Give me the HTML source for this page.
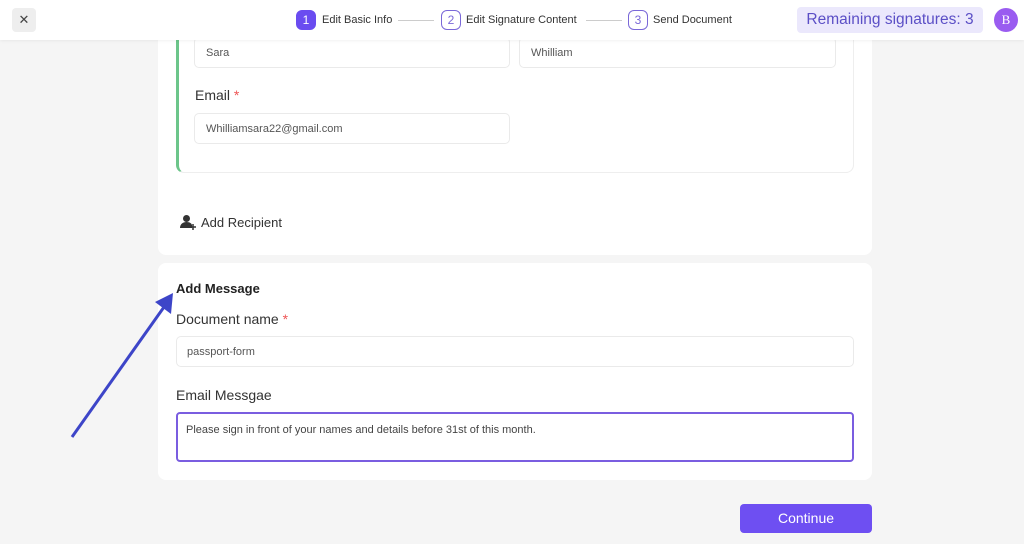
<!DOCTYPE html><html><head><style>
*{box-sizing:border-box;margin:0;padding:0}
body{width:1024px;height:544px;overflow:hidden;background:#f5f5f5;font-family:"Liberation Sans",sans-serif;position:relative;color:#333}
.abs{position:absolute}
.hdr{left:0;top:0;width:1024px;height:40px;background:#fff;box-shadow:0 1px 3px rgba(0,0,0,.06);z-index:2}
.circ{width:20px;height:20px;border-radius:6px;border:1px solid #7a68d8;font-size:12px;text-align:center;line-height:18px;color:#7a68d8}
.st{font-size:11px;color:#333;top:14px}
.ln{height:1px;background:#ccc;top:20px}
.card{background:#fff;border-radius:8px;left:158px;width:714px}
.inp{background:#fff;border:1px solid #eaeaea;border-radius:5px;font-size:11px;color:#555;padding-left:11px;line-height:30px}
.lbl{font-size:14px;color:#333}
.lbl b{color:#e55;font-weight:normal}
</style></head><body>
<div class="abs hdr">
 <div class="abs" style="left:12px;top:8px;width:24px;height:24px;background:#eee;border-radius:4px;text-align:center;line-height:24px;font-size:13px;color:#444">✕</div>
 <div class="abs circ" style="left:296px;top:10px;background:#6a4cf0;border-color:#6a4cf0;color:#fff">1</div>
 <div class="abs st" style="left:322px">Edit Basic Info</div>
 <div class="abs ln" style="left:398px;width:36px"></div>
 <div class="abs circ" style="left:441px;top:10px">2</div>
 <div class="abs st" style="left:466px">Edit Signature Content</div>
 <div class="abs ln" style="left:586px;width:36px"></div>
 <div class="abs circ" style="left:628px;top:10px">3</div>
 <div class="abs st" style="left:653px">Send Document</div>
 <div class="abs" style="left:797px;top:7px;width:186px;height:26px;background:#ebe8fc;border-radius:4px;color:#5b4fc6;font-size:15.5px;line-height:26px;text-align:center">Remaining signatures: 3</div>
 <div class="abs" style="left:994px;top:8px;width:24px;height:24px;border-radius:50%;background:#9a5cf0;color:#fff;font-family:'Liberation Serif',serif;font-size:13px;text-align:center;line-height:24px">B</div>
</div>
<div class="abs card" style="top:0;height:255px"></div>
<div class="abs" style="left:176px;top:30px;width:678px;height:143px;border:1px solid #eee;border-left:3px solid #6cc58a;border-radius:0 0 8px 8px"></div>
<div class="abs inp" style="left:194px;top:37px;width:316px;height:31px">Sara</div>
<div class="abs inp" style="left:519px;top:37px;width:317px;height:31px">Whilliam</div>
<div class="abs lbl" style="left:195px;top:87px">Email <b>*</b></div>
<div class="abs inp" style="left:194px;top:113px;width:316px;height:31px">Whilliamsara22@gmail.com</div>
<svg class="abs" style="left:180px;top:214px" width="17" height="17" viewBox="0 0 17 17"><circle cx="6.5" cy="4.5" r="3.5" fill="#333"/><path d="M0 14c0-4 3-6 6.5-6s5 1.5 5.5 3v3z" fill="#333"/><path d="M13 10v6M10 13h6" stroke="#333" stroke-width="1.5"/></svg>
<div class="abs" style="left:201px;top:215px;font-size:13px;color:#333">Add Recipient</div>
<div class="abs card" style="top:263px;height:217px"></div>
<div class="abs" style="left:176px;top:281px;font-size:13px;font-weight:bold;color:#222">Add Message</div>
<div class="abs lbl" style="left:176px;top:311px">Document name <b>*</b></div>
<div class="abs inp" style="left:176px;top:336px;width:678px;height:31px;padding-left:10px">passport-form</div>
<div class="abs lbl" style="left:176px;top:387px">Email Messgae</div>
<div class="abs" style="left:176px;top:412px;width:678px;height:50px;border:2px solid #7a5de0;border-radius:4px;font-size:11px;color:#444;padding:10px 8px">Please sign in front of your names and details before 31st of this month.</div>
<div class="abs" style="left:740px;top:504px;width:132px;height:29px;background:#6e4ff2;border-radius:4px;color:#fff;font-size:14px;text-align:center;line-height:29px">Continue</div>
<svg class="abs" style="left:0;top:0" width="1024" height="544"><line x1="72" y1="437" x2="164" y2="307" stroke="#3d45c8" stroke-width="3"/><polygon points="173,293 171,314 155,302" fill="#3d45c8"/></svg>
</body></html>
